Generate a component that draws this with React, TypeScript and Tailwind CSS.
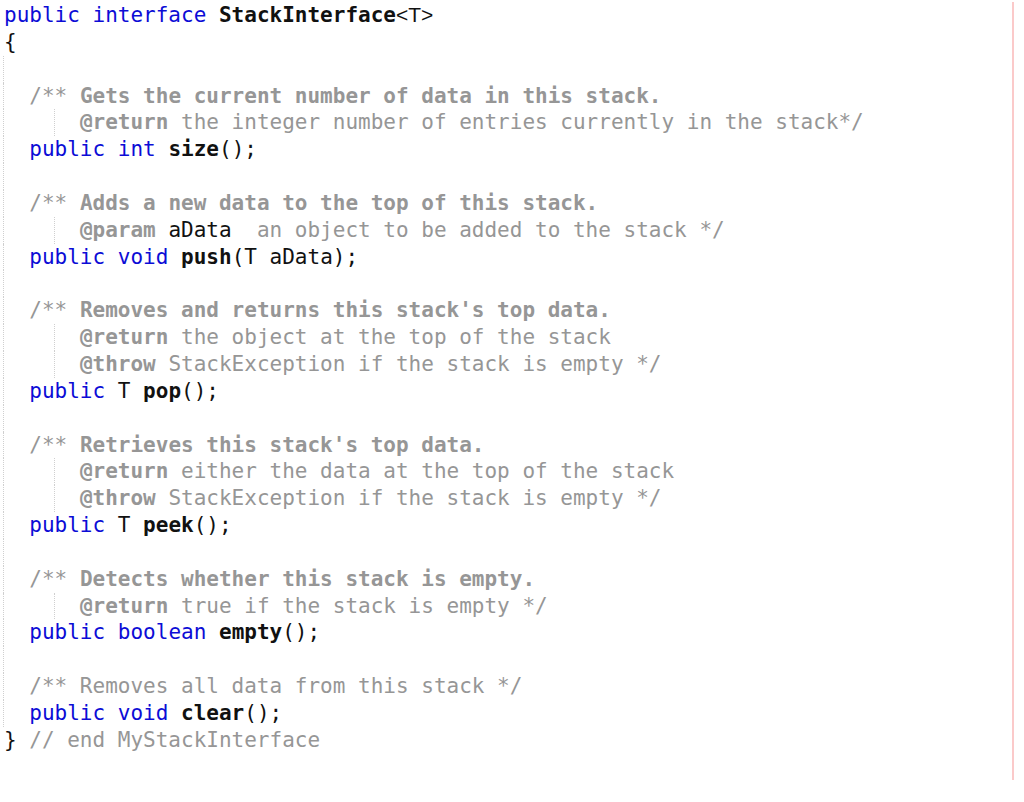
type Kind = "kw" | "b" | "t" | "c" | "cb" | "sans";
type Tok = [Kind, string];
type Line = { g0?: boolean; g4?: boolean; toks: Tok[] };

const kindClass: Record<Kind, string> = {
  kw: "text-[#0c0cd6]",
  b: "text-[#111] font-bold",
  t: "text-[#111]",
  c: "text-[#969696]",
  cb: "text-[#969696] font-bold",
  sans: "text-[#111] font-['Liberation_Sans',sans-serif]",
};

const blank: Line = { g0: true, toks: [] };

const lines: Line[] = [
  { toks: [["kw", "public"], ["t", " "], ["kw", "interface"], ["t", " "], ["b", "StackInterface"], ["sans", "<T>"]] },
  { toks: [["t", "{"]] },
  blank,
  { g0: true, toks: [["t", "  "], ["c", "/** "], ["cb", "Gets the current number of data in this stack."]] },
  { g0: true, g4: true, toks: [["cb", "@return"], ["c", " the integer number of entries currently in the stack*/"]] },
  { g0: true, toks: [["t", "  "], ["kw", "public"], ["t", " "], ["kw", "int"], ["t", " "], ["b", "size"], ["t", "();"]] },
  blank,
  { g0: true, toks: [["t", "  "], ["c", "/** "], ["cb", "Adds a new data to the top of this stack."]] },
  { g0: true, g4: true, toks: [["cb", "@param"], ["c", " "], ["t", "aData"], ["c", "  an object to be added to the stack */"]] },
  { g0: true, toks: [["t", "  "], ["kw", "public"], ["t", " "], ["kw", "void"], ["t", " "], ["b", "push"], ["t", "(T aData);"]] },
  blank,
  { g0: true, toks: [["t", "  "], ["c", "/** "], ["cb", "Removes and returns this stack's top data."]] },
  { g0: true, g4: true, toks: [["cb", "@return"], ["c", " the object at the top of the stack"]] },
  { g0: true, g4: true, toks: [["cb", "@throw"], ["c", " StackException if the stack is empty */"]] },
  { g0: true, toks: [["t", "  "], ["kw", "public"], ["t", " T "], ["b", "pop"], ["t", "();"]] },
  blank,
  { g0: true, toks: [["t", "  "], ["c", "/** "], ["cb", "Retrieves this stack's top data."]] },
  { g0: true, g4: true, toks: [["cb", "@return"], ["c", " either the data at the top of the stack"]] },
  { g0: true, g4: true, toks: [["cb", "@throw"], ["c", " StackException if the stack is empty */"]] },
  { g0: true, toks: [["t", "  "], ["kw", "public"], ["t", " T "], ["b", "peek"], ["t", "();"]] },
  blank,
  { g0: true, toks: [["t", "  "], ["c", "/** "], ["cb", "Detects whether this stack is empty."]] },
  { g0: true, g4: true, toks: [["cb", "@return"], ["c", " true if the stack is empty */"]] },
  { g0: true, toks: [["t", "  "], ["kw", "public"], ["t", " "], ["kw", "boolean"], ["t", " "], ["b", "empty"], ["t", "();"]] },
  blank,
  { g0: true, toks: [["t", "  "], ["c", "/** Removes all data from this stack */"]] },
  { g0: true, toks: [["t", "  "], ["kw", "public"], ["t", " "], ["kw", "void"], ["t", " "], ["b", "clear"], ["t", "();"]] },
  { toks: [["t", "} "], ["c", "// end MyStackInterface"]] },
  { toks: [] },
];

const guide = "border-l border-dotted border-[#cfcfcf] -ml-px";

function CodeLine({ line }: { line: Line }) {
  return (
    <div className="flex h-[26.85px] w-[1014px] border-r-2 border-[#fbcaca] pl-[4px] whitespace-pre leading-[26.85px]">
      {line.g0 && <span className={guide}>{line.g4 ? "    " : line.toks.length ? "" : "  "}</span>}
      {line.g4 && <span className={guide}>{"  "}</span>}
      {line.toks.map(([k, s], i) => (
        <span key={i} className={kindClass[k]}>
          {s}
        </span>
      ))}
    </div>
  );
}

export default function App() {
  return (
    <div className="w-[1024px] h-[802px] bg-white pt-[2px] font-['DejaVu_Sans_Mono',monospace] text-[21px] overflow-hidden">
      {lines.map((line, i) => (
        <CodeLine key={i} line={line} />
      ))}
    </div>
  );
}
